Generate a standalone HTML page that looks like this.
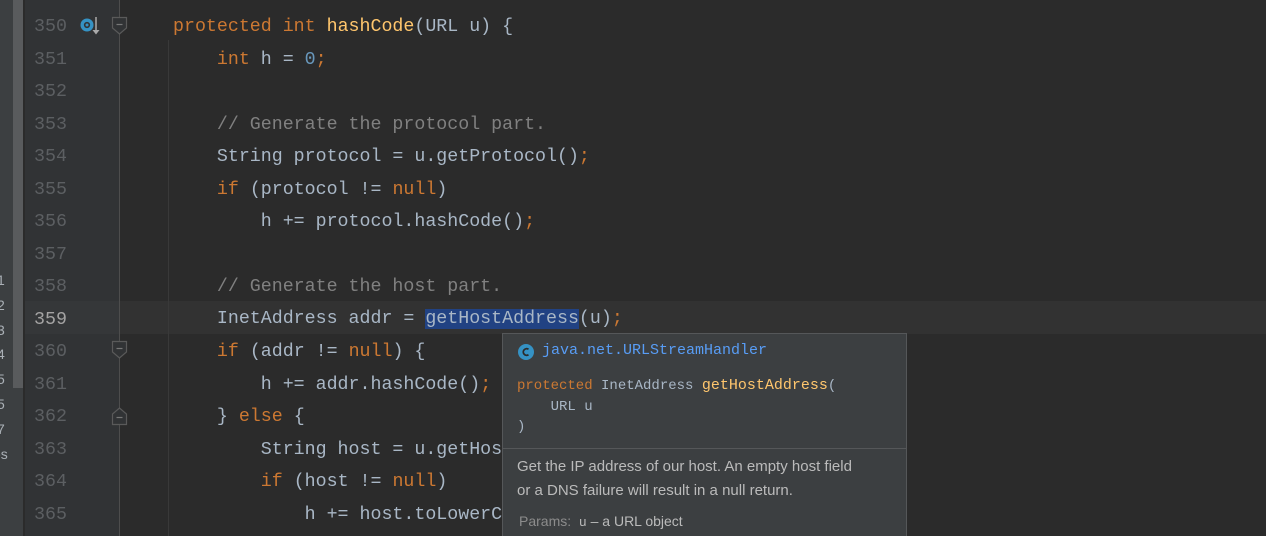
<!DOCTYPE html>
<html><head><meta charset="utf-8"><style>
*{margin:0;padding:0;box-sizing:border-box}
html,body{width:1266px;height:536px;overflow:hidden;background:#2b2b2b}
body{position:relative;font-family:"Liberation Mono",monospace;font-size:18.3px}
.lp{position:absolute;left:0;top:0;width:13px;height:536px;background:#3c3f41;overflow:hidden}
.lp div{position:absolute;left:-3px;font-family:"Liberation Sans",sans-serif;font-size:14px;color:#aab0b6}
.sb{position:absolute;left:13px;top:0;width:10px;height:536px;background:#3c3f41}
.sbt{position:absolute;left:13px;top:0;width:10px;height:388px;background:#595b5d}
.gut{position:absolute;left:25px;top:0;width:95px;height:536px;background:#313335}
.ln{position:absolute;left:34px;width:40px;color:#5c5f62;line-height:32.53px;height:32.53px}
.cur{position:absolute;left:25px;width:1241px;top:301px;height:32.5px;background:#323232}
.curg{position:absolute;left:25px;width:95px;top:301px;height:32.5px;background:#353739}
.vl{position:absolute;left:119px;top:0;width:1px;height:536px;background:#4d4d4d}
.ig{position:absolute;left:168px;top:40px;width:1px;height:496px;background:#393939}
.code{position:absolute;left:173px;white-space:pre;color:#a9b7c6;line-height:32.53px;height:32.53px}
.k{color:#cc7832}.f{color:#ffc66d}.c{color:#808080}.n{color:#6897bb}
.sel{background:#214283}
.pop{position:absolute;left:502px;top:333px;width:405px;height:210px;background:#3c3f41;border:1px solid #555759}
.pop .sep{position:absolute;left:0;right:0;top:114px;height:1px;background:#555759}
.pm{position:absolute;font-family:"Liberation Mono",monospace;font-size:14px;white-space:pre}
.ps{position:absolute;font-family:"Liberation Sans",sans-serif;font-size:15px;color:#bbbbbb;white-space:pre}
.L{position:absolute;left:0;top:2px;width:1266px;height:536px}
</style></head><body>
<div class="lp">
<div style="top:272px">1</div><div style="top:297px">2</div><div style="top:322px">3</div><div style="top:346px">4</div><div style="top:371px">5</div><div style="top:396px">5</div><div style="top:421px">7</div><div style="top:446px;left:-7px">es</div>
</div>
<div class="sb"></div><div class="sbt"></div>
<div class="gut"></div>
<div class="cur"></div><div class="curg"></div>
<div class="vl"></div>
<div class="ig"></div>
<svg style="position:absolute;left:78px;top:14px" width="50" height="24">
<circle cx="9" cy="11" r="6.5" fill="#3592c4"/><circle cx="9" cy="11" r="2.3" fill="none" stroke="#313335" stroke-width="1.6"/>
<path d="M18 3V18" stroke="#aaa" stroke-width="1.5"/><path d="M14.5 16L18 20.5L21.5 16Z" fill="#aaa"/>
<path d="M34.5 3.5H48.5V14L41.5 20L34.5 14Z" fill="#313335" stroke="#5a5a5a" stroke-width="1.2"/><path d="M38.5 10.5H44.5" stroke="#777" stroke-width="1.2"/>
</svg>
<svg style="position:absolute;left:111px;top:340px" width="18" height="22"><path d="M1.5 1.5H15.5V12L8.5 18L1.5 12Z" fill="#313335" stroke="#5a5a5a" stroke-width="1.2"/><path d="M5.5 8.5H11.5" stroke="#777" stroke-width="1.2"/></svg>
<svg style="position:absolute;left:111px;top:404px" width="18" height="22"><path d="M1.5 20.5H15.5V10L8.5 4L1.5 10Z" fill="#313335" stroke="#5a5a5a" stroke-width="1.2"/><path d="M5.5 13.5H11.5" stroke="#777" stroke-width="1.2"/></svg>
<div class="L">
<div class="ln" style="top:9px">350</div>
<div class="ln" style="top:41.5px">351</div>
<div class="ln" style="top:74px">352</div>
<div class="ln" style="top:106.6px">353</div>
<div class="ln" style="top:139.1px">354</div>
<div class="ln" style="top:171.6px">355</div>
<div class="ln" style="top:204.2px">356</div>
<div class="ln" style="top:236.7px">357</div>
<div class="ln" style="top:269.2px">358</div>
<div class="ln" style="top:301.8px;color:#a4a3a3">359</div>
<div class="ln" style="top:334.3px">360</div>
<div class="ln" style="top:366.8px">361</div>
<div class="ln" style="top:399.4px">362</div>
<div class="ln" style="top:431.9px">363</div>
<div class="ln" style="top:464.4px">364</div>
<div class="ln" style="top:497px">365</div>

<div class="code" style="top:9px"><span class="k">protected int </span><span class="f">hashCode</span>(URL u) {</div>
<div class="code" style="top:41.5px">    <span class="k">int </span>h = <span class="n">0</span><span class="k">;</span></div>
<div class="code" style="top:106.6px">    <span class="c">// Generate the protocol part.</span></div>
<div class="code" style="top:139.1px">    String protocol = u.getProtocol()<span class="k">;</span></div>
<div class="code" style="top:171.6px">    <span class="k">if </span>(protocol != <span class="k">null</span>)</div>
<div class="code" style="top:204.2px">        h += protocol.hashCode()<span class="k">;</span></div>
<div class="code" style="top:269.2px">    <span class="c">// Generate the host part.</span></div>
<div class="code" style="top:300.8px">    InetAddress addr = <span class="sel">getHostAddress</span>(u)<span class="k">;</span></div>
<div class="code" style="top:334.3px">    <span class="k">if </span>(addr != <span class="k">null</span>) {</div>
<div class="code" style="top:366.8px">        h += addr.hashCode()<span class="k">;</span></div>
<div class="code" style="top:399.4px">    } <span class="k">else </span>{</div>
<div class="code" style="top:431.9px">        String host = u.getHost()<span class="k">;</span></div>
<div class="code" style="top:464.4px">        <span class="k">if </span>(host != <span class="k">null</span>)</div>
<div class="code" style="top:497px">            h += host.toLowerCase()<span class="k">;</span></div>
</div>

<div class="pop">
<svg style="position:absolute;left:14px;top:9px" width="18" height="18"><circle cx="9" cy="9" r="8" fill="#3592c4"/><path d="M11.5 6.3A3.3 3.3 0 1 0 11.5 11.7" fill="none" stroke="#2b2b2b" stroke-width="1.8"/></svg>
<div class="pm" style="left:39px;top:8px;color:#589df6;font-size:15px">java.net.URLStreamHandler</div>
<div class="pm" style="left:14px;top:43px"><span style="color:#cc7832">protected </span><span style="color:#a9b7c6">InetAddress </span><span style="color:#ffc66d;font-size:15px">getHostAddress</span><span style="color:#a9b7c6">(</span></div>
<div class="pm" style="left:14px;top:65px;color:#a9b7c6">    URL u</div>
<div class="pm" style="left:14px;top:85px;color:#a9b7c6">)</div>
<div class="sep"></div>
<div class="ps" style="left:14px;top:124px">Get the IP address of our host. An empty host field</div>
<div class="ps" style="left:14px;top:148px">or a DNS failure will result in a null return.</div>
<div class="ps" style="left:16px;top:179px;font-size:14px"><span style="color:#8c8c8c">Params:  </span><span style="font-family:'Liberation Mono',monospace;font-size:13px">u</span> – a URL object</div>
</div>
</body></html>
